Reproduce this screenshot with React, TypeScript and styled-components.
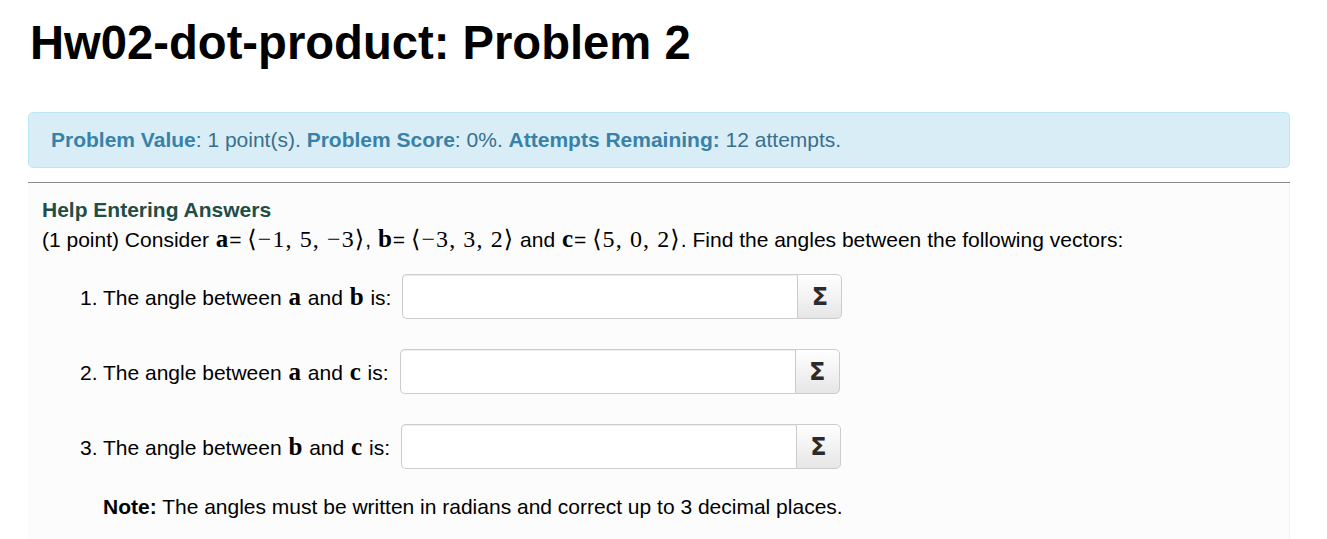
import React from "react";
import styled, { createGlobalStyle } from "styled-components";

const Global = createGlobalStyle`
  html, body { margin: 0; padding: 0; background: #ffffff; }
  body { font-family: "Liberation Sans", Arial, sans-serif; color: #000; }
`;

const Page = styled.div`
  width: 1327px;
  height: 539px;
  overflow: hidden;
  padding: 0 37px 0 28px;
  box-sizing: border-box;
`;

const Title = styled.h1`
  margin: 0;
  padding: 14px 0 0 2px;
  font-size: 47.2px;
  line-height: 58px;
  font-weight: 700;
`;

const Alert = styled.div`
  margin-top: 40px;
  height: 56px;
  box-sizing: border-box;
  background: #d9edf7;
  border: 1px solid #bce8f1;
  border-radius: 5px;
  color: #3a6f8c;
  padding: 0 22px;
  display: flex;
  align-items: center;
  font-size: 21px;
  white-space: pre;
`;

const AlertStrong = styled.b`
  font-weight: 700;
  color: #3882a8;
`;

const Strong = styled.b`
  font-weight: 700;
`;

const Rule = styled.div`
  margin-top: 14px;
  border-top: 1.5px solid #8a8a8a;
`;

const Panel = styled.div`
  background: #fcfcfc;
  border-right: 1px solid #f2f2f2;
  padding: 14px 0 0 14px;
  height: 400px;
  font-size: 21px;
`;

const Heading = styled.div`
  font-weight: 700;
  color: #1f4d47;
  line-height: 26px;
`;

const Text = styled.div`
  line-height: 32px;
  white-space: nowrap;
`;

const MB = styled.span`
  font-family: "Liberation Serif", "DejaVu Serif", serif;
  font-weight: 700;
  font-size: 25px;
  margin: 0 1px;
`;

const MR = styled.span`
  font-family: "Liberation Serif", "DejaVu Serif", serif;
  font-size: 24px;
  letter-spacing: 1.1px;
`;

const List = styled.ol`
  margin: 18px 0 0 0;
  padding-left: 38px;
  display: flex;
  flex-direction: column;
  gap: 30px;
`;

const Item = styled.li`
  display: flex;
  align-items: center;
  gap: 11px;
  list-style: none;
  white-space: nowrap;
`;

const InputGroup = styled.div`
  display: flex;
  width: 440px;
  height: 45px;
`;

const Field = styled.input`
  flex: 1;
  border: 1px solid #cccccc;
  border-right: none;
  border-radius: 5px 0 0 5px;
  box-shadow: inset 0 1px 1px rgba(0,0,0,0.075);
  background: #fff;
  outline: none;
`;

const SigmaButton = styled.button`
  width: 45px;
  border: 1px solid #cccccc;
  border-radius: 0 5px 5px 0;
  background: linear-gradient(#ffffff, #e6e6e6);
  font-family: "DejaVu Sans", sans-serif;
  font-weight: 700;
  font-size: 24px;
  color: #2b2b2b;
  padding: 0;
  display: flex;
  align-items: center;
  justify-content: center;
`;

const Note = styled.div`
  margin: 25px 0 0 61px;
  line-height: 26px;
`;

const items = [
  { n: 1, a: "a", b: "b" },
  { n: 2, a: "a", b: "c" },
  { n: 3, a: "b", b: "c" },
];

export default function App() {
  return (
    <>
      <Global />
      <Page>
        <Title>Hw02-dot-product: Problem 2</Title>
        <Alert>
          <AlertStrong>Problem Value</AlertStrong>: 1 point(s). <AlertStrong>Problem Score</AlertStrong>: 0%. <AlertStrong>Attempts Remaining:</AlertStrong> 12 attempts.
        </Alert>
        <Rule />
        <Panel>
          <Heading>Help Entering Answers</Heading>
          <Text>
            (1 point) Consider <MB>a</MB>= <MR>⟨−1, 5, −3⟩</MR>, <MB>b</MB>= <MR>⟨−3, 3, 2⟩</MR> and <MB>c</MB>= <MR>⟨5, 0, 2⟩</MR>. Find the angles between the following vectors:
          </Text>
          <List>
            {items.map((it) => (
              <Item key={it.n}>
                <span>
                  {it.n}. The angle between <MB>{it.a}</MB> and <MB>{it.b}</MB> is:
                </span>
                <InputGroup>
                  <Field type="text" />
                  <SigmaButton>Σ</SigmaButton>
                </InputGroup>
              </Item>
            ))}
          </List>
          <Note>
            <Strong>Note:</Strong> The angles must be written in radians and correct up to 3 decimal places.
          </Note>
        </Panel>
      </Page>
    </>
  );
}
